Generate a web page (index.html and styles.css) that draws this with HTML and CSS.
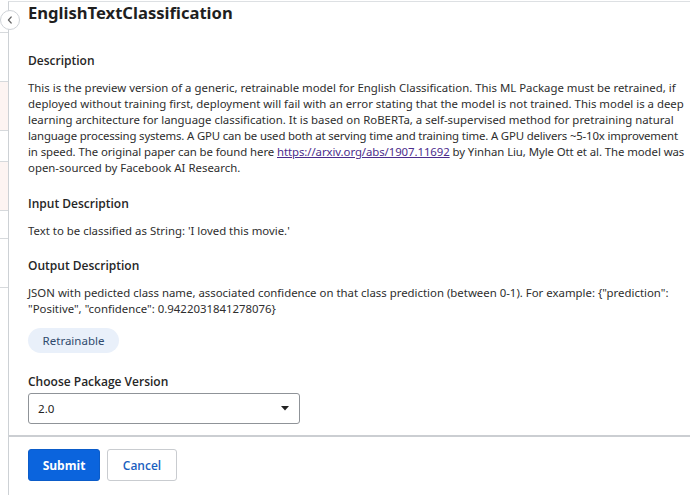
FILE: index.html
```html
<!DOCTYPE html>
<html lang="en">
<head>
<meta charset="utf-8">
<title>EnglishTextClassification</title>
<link rel="stylesheet" href="styles.css">
</head>
<body>
<div class="page">
  <div class="backdrop">
    <div class="bg-row"></div>
    <div class="bg-row tint"></div>
    <div class="bg-row short"></div>
    <div class="bg-row tint"></div>
    <div class="bg-row mid"></div>
    <div class="bg-row"></div>
    <div class="bg-row"></div>
  </div>
  <button class="collapse" aria-label="Collapse">
    <svg width="10" height="10" viewBox="0 0 10 10"><path d="M6.2 2 L3.4 5 L6.2 8" fill="none" stroke="#666" stroke-width="1.2" stroke-linecap="round" stroke-linejoin="round"/></svg>
  </button>
  <section class="panel">
    <div class="scroll">
      <h1 class="title">EnglishTextClassification</h1>
      <h2 class="label first">Description</h2>
      <p class="text lines">This is the preview version of a generic, retrainable model for English Classification. This ML Package must be retrained, if<br>
deployed without training first, deployment will fail with an error stating that the model is not trained. This model is a deep<br>
learning architecture for language classification. It is based on RoBERTa, a self-supervised method for pretraining natural<br>
<span class="tight">language processing systems. A GPU can be used both at serving time and training time. A GPU delivers ~5-10x improvement</span><br>
<span class="snug">in speed. The original paper can be found here <a href="#">https://arxiv.org/abs/1907.11692</a> by Yinhan Liu, Myle Ott et al. The model was</span><br>
open-sourced by Facebook AI Research.</p>
      <h2 class="label">Input Description</h2>
      <p class="text">Text to be classified as String: 'I loved this movie.'</p>
      <h2 class="label output">Output Description</h2>
      <p class="text">JSON with pedicted class name, associated confidence on that class prediction (between 0-1). For example: {"prediction": "Positive", "confidence": 0.9422031841278076}</p>
      <span class="pill">Retrainable</span>
      <h2 class="label version">Choose Package Version</h2>
      <div class="select">
        <span>2.0</span>
        <svg width="8" height="5" viewBox="0 0 8 5"><path d="M0 0 H8 L4 4.5 Z" fill="#222"/></svg>
      </div>
    </div>
    <footer class="footer">
      <button class="btn primary">Submit</button>
      <button class="btn secondary">Cancel</button>
    </footer>
  </section>
</div>
</body>
</html>
```
FILE: styles.css
```css
* { box-sizing: border-box; }
html, body { margin: 0; padding: 0; }
body {
  font-family: "Noto Sans", "Open Sans", sans-serif;
  color: #2b2b2b;
  background: #fff;
  width: 690px;
  height: 495px;
  overflow: hidden;
}
.page {
  position: relative;
  display: flex;
  height: 495px;
}
.backdrop {
  width: 8px;
  flex: none;
  display: flex;
  flex-direction: column;
  padding-top: 32px;
}
.bg-row {
  border-top: 1px solid #d6d9dc;
  height: 49px;
}
.bg-row.tint { background: #fdf4f2; }
.bg-row.short { height: 31px; }
.bg-row.mid { height: 28px; }
.collapse {
  position: absolute;
  left: 0;
  top: 10px;
  width: 20px;
  height: 20px;
  border-radius: 50%;
  border: 1px solid #cfd3d8;
  background: #fff;
  padding: 0;
  display: flex;
  align-items: center;
  justify-content: center;
  z-index: 2;
}
.panel {
  flex: 1;
  min-width: 0;
  display: flex;
  flex-direction: column;
  border-left: 1px solid #cdd1d5;
  border-top: 1px solid #dde0e3;
  margin-top: 1px;
}
.scroll {
  flex: none;
  height: 433px;
  padding: 0 0 0 19px;
  display: flex;
  flex-direction: column;
  align-items: flex-start;
}
.title {
  margin: 0;
  font-size: 16.6px;
  line-height: 22px;
  font-weight: 700;
  color: #1f1f1f;
}
.label {
  margin: 19px 0 0;
  font-family: "Open Sans", "Noto Sans", sans-serif;
  font-size: 12px;
  line-height: 18px;
  font-weight: 600;
  color: #262626;
}
.label.first { margin-top: 28px; }
.label.output { margin-top: 18px; }
.text {
  margin: 10px 0 0;
  font-size: 11.4px;
  line-height: 16px;
  color: #2e2e2e;
  padding-right: 2px;
}
.text.lines { white-space: nowrap; }
.tight { letter-spacing: -0.16px; }
.snug { letter-spacing: -0.08px; }
.text a { color: #4b2c8c; }
.pill {
  margin-top: 11px;
  height: 25px;
  width: 91px;
  border-radius: 13px;
  background: #e9f0fa;
  color: #2f4a6d;
  font-size: 11.5px;
  display: flex;
  align-items: center;
  justify-content: center;
}
.label.version { margin-top: 20px; }
.select {
  margin-top: 2px;
  width: 272px;
  height: 31px;
  border: 1px solid #8f9398;
  border-radius: 3px;
  display: flex;
  align-items: center;
  justify-content: space-between;
  padding: 0 10px 0 9px;
  font-size: 11.6px;
  color: #222;
}
.footer {
  border-top: 2px solid #cbced2;
  padding: 12px 0 0 19px;
  display: flex;
  gap: 7px;
}
.btn {
  height: 32px;
  border-radius: 3px;
  font-family: "Open Sans", "Noto Sans", sans-serif;
  font-size: 12px;
  font-weight: 700;
  padding: 0;
}
.primary {
  width: 72px;
  background: #0b64dd;
  border: 1px solid #0b5cc9;
  color: #fff;
}
.secondary {
  width: 70px;
  background: #fff;
  border: 1px solid #c9ccd0;
  color: #1a5fc0;
  font-weight: 600;
}
```
